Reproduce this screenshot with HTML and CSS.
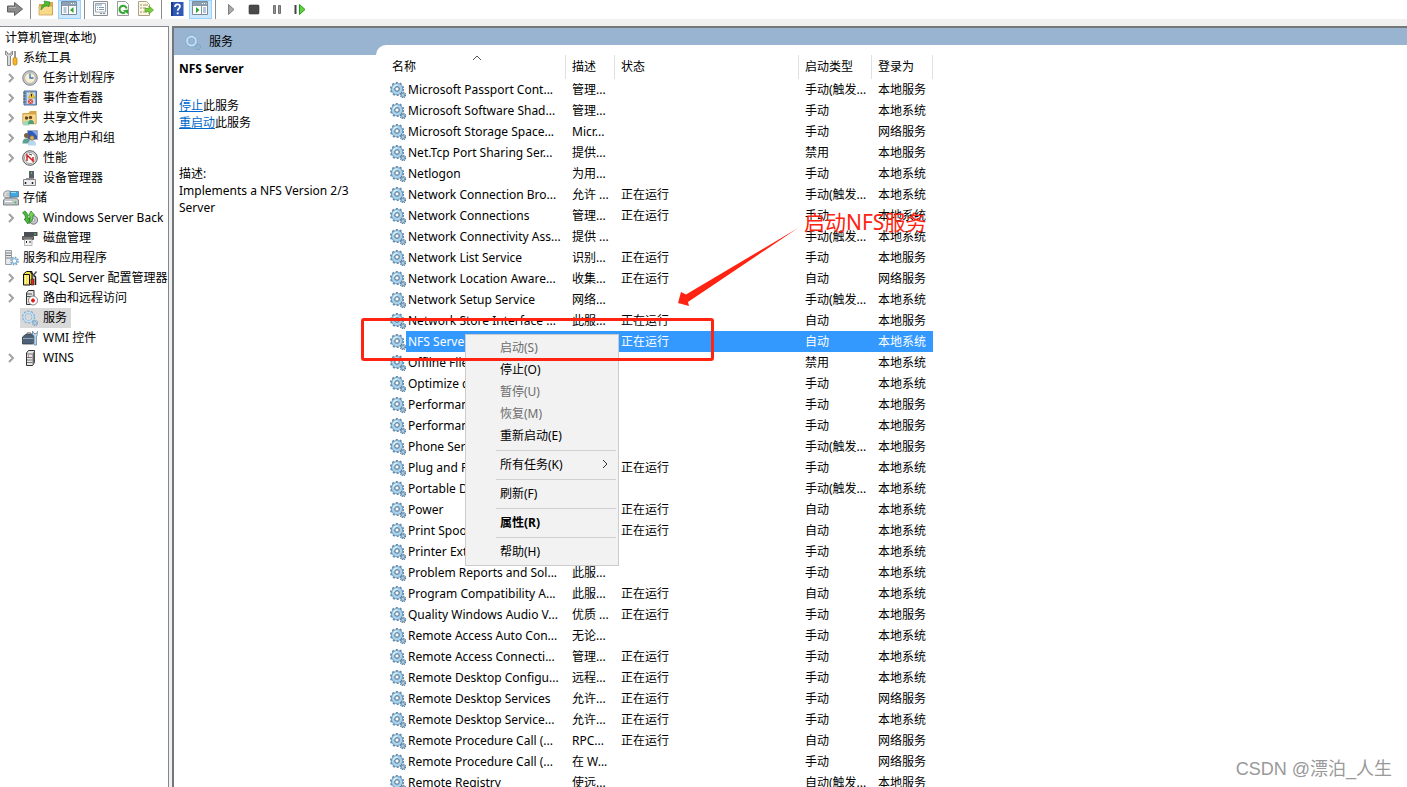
FILE: index.html
```html
<!DOCTYPE html>
<html lang="zh-CN">
<head>
    <meta charset="UTF-8">
    <meta name="viewport" content="width=device-width, initial-scale=1.0">
    <title>计算机管理</title>
    <link rel="stylesheet" href="styles.css">
</head>
<body>

    <!-- Shared icons -->
    <svg class="sprite" aria-hidden="true">
        <symbol id="gear" viewBox="0 0 16 16">
            <circle cx="7" cy="7" r="6.2" fill="none" stroke="#5f88ab" stroke-width="1.8" stroke-dasharray="2 1.9"/>
            <circle cx="7" cy="7" r="4.2" fill="none" stroke="#6d98ba" stroke-width="3.8"/>
            <circle cx="7" cy="7" r="4" fill="none" stroke="#a9d3ea" stroke-width="2.4"/>
            <path d="M3.500 6a4 4 0 0 1 4-3" fill="none" stroke="#dff3fb" stroke-width="1.200"/>
            <circle cx="7" cy="7" r="2.1" fill="#fff" stroke="#4c6d8c" stroke-width=".9"/>
            <circle cx="13" cy="13" r="2.600" fill="none" stroke="#4f7696" stroke-width="1.200" stroke-dasharray="1.200 .84"/>
            <circle cx="13" cy="13" r="1.500" fill="#fff" stroke="#7aa2c0" stroke-width="1.500"/>
        </symbol>
        <symbol id="gear-light" viewBox="0 0 16 16">
            <circle cx="6.500" cy="7" r="5.900" fill="none" stroke="#7fa9cb" stroke-width="1.200" stroke-dasharray="2 1.700"/>
            <circle cx="6.500" cy="7" r="4.400" fill="none" stroke="#8fb7d6" stroke-width="2.600"/>
            <circle cx="6.500" cy="7" r="4.500" fill="none" stroke="#c9e6f6" stroke-width="1.500"/>
            <circle cx="13" cy="13" r="2.600" fill="none" stroke="#7ba3c2" stroke-width="1.200" stroke-dasharray="1.200 .84"/>
            <circle cx="13" cy="13" r="1.500" fill="none" stroke="#8db3cf" stroke-width="1.200"/>
        </symbol>
        <symbol id="chevron" viewBox="0 0 12 12">
            <path d="M4 2l4 4-4 4" fill="none" stroke="#a3a3a3" stroke-width="2"/>
        </symbol>
        <symbol id="console" viewBox="0 0 16 16">
            <path d="M.5 1.5h15v13H.5z" fill="#fff" stroke="#7e8b99"/>
            <path d="M1 2h14v3H1z" fill="#8ba0b5"/>
            <path d="M10 3.5h1M12 3.5h1M14 3.5h.5" stroke="#fff"/>
        </symbol>
    </svg>

    <!-- Toolbar -->
    <div id="toolbar">
        <button class="tool" aria-label="前进">
            <svg viewBox="0 0 16 16"><path d="M.5 6h7V2.500l8 6.500-8 6.500V12h-7z" fill="#8b8b8b" stroke="#5f5f5f"/><path d="M2 7.500h7" stroke="#b5b5b5"/></svg>
        </button>
        <span class="divider"></span>
        <button class="tool" aria-label="向上">
            <svg viewBox="0 0 16 16"><path d="M1 4h5l2-2h7v13H1z" fill="#d9a94a"/><path d="M1 6h13.5v9H1z" fill="#f8d98a" stroke="#c59a45" stroke-width=".7"/><path d="M3 10c0-4 1-5 4-6L6 1l6 1-1.500 5-1.500-1.500c-3 1-4 2-6 4.500z" fill="#4dbd31" stroke="#23821c" stroke-width=".6"/></svg>
        </button>
        <button class="tool active" aria-label="显示/隐藏控制台树">
            <svg viewBox="0 0 16 16"><use href="#console"/><path d="M1 5.500h14M7.500 6v8" stroke="#8a97a5"/><path d="M2.500 8h3M2.500 10h3M2.500 12h3" stroke="#6d8fb5"/><path d="M12.500 7v6L9 10z" fill="#2fa52a"/></svg>
        </button>
        <span class="divider"></span>
        <button class="tool" aria-label="属性">
            <svg viewBox="0 0 16 16"><path d="M1.500 1.500h14v14h-14z" fill="#f6f8fa" stroke="#8a8f94"/><path d="M3.500 3.500h10v8.500h-10z" fill="#fff" stroke="#9ba9b7"/><path d="M4 5h6M5 7.500h1M7 7.500h5M5 9.500h1M7 9.500h5" stroke="#7f9cba"/><path d="M8 13.500h2M11 13.500h2" stroke="#888"/></svg>
        </button>
        <button class="tool" aria-label="刷新">
            <svg viewBox="0 0 16 16"><path d="M2.500 1.500h8l3 3v11h-11z" fill="#fcfcfc" stroke="#9b9b9b"/><path d="M10 12.500a3.600 3.600 0 1 1 1.600-4" fill="none" stroke="#2fa82e" stroke-width="2"/><path d="M7.500 10.500l5.500-1v4.500z" fill="#2fa82e"/></svg>
        </button>
        <button class="tool" aria-label="导出列表">
            <svg viewBox="0 0 16 16"><path d="M.5 1.500h8l3 3v11H.5z" fill="#fdf8df" stroke="#aaa288"/><path d="M2 5h2M5 5h5M2 8h2M5 8h3M2 12h2M5 12h4" stroke="#9a957e"/><path d="M7 8.500h4V6l4.500 4-4.500 4v-2.500H7z" fill="#7ccb3c" stroke="#4d9b22" stroke-width=".7"/></svg>
        </button>
        <span class="divider"></span>
        <button class="tool" aria-label="帮助">
            <svg viewBox="0 0 16 16"><path d="M2 2h12.500v14H2z" fill="#3158b5"/><path d="M2 2h2v14H2z" fill="#1d3b8b"/><path d="M6 7c0-3.500 5-3.500 5-.7 0 2-2.300 2-2.300 4.500" fill="none" stroke="#fff" stroke-width="1.700"/><circle cx="8.700" cy="13.300" r="1.100" fill="#fff"/></svg>
        </button>
        <button class="tool active" aria-label="显示/隐藏操作窗格">
            <svg viewBox="0 0 16 16"><use href="#console"/><path d="M1 5.500h14M9.500 6v8" stroke="#8a97a5"/><path d="M11 8h3M11 10h3M11 12h3" stroke="#6d8fb5"/><path d="M4 7v6l3.500-3z" fill="#2fa52a"/></svg>
        </button>
        <span class="divider"></span>
        <button class="tool" aria-label="启动服务">
            <svg viewBox="0 0 16 16"><path d="M5.500 4.500v10l5.500-5z" fill="#a9a9a9" stroke="#7d7d7d"/></svg>
        </button>
        <button class="tool" aria-label="停止服务">
            <svg viewBox="0 0 16 16"><rect x="3" y="5" width="10" height="9" rx="1" fill="#4a4a4a" stroke="#333" stroke-width=".6"/></svg>
        </button>
        <button class="tool" aria-label="暂停服务">
            <svg viewBox="0 0 16 16"><path d="M4.500 5.500h2v8h-2zM9.500 5.500h2v8h-2z" fill="#999" stroke="#6f6f6f"/></svg>
        </button>
        <button class="tool" aria-label="重启动服务">
            <svg viewBox="0 0 16 16"><path d="M2.500 5h2v9h-2z" fill="#444"/><path d="M7.500 4.500v10l5.500-5z" fill="#5fd33b" stroke="#26981f"/></svg>
        </button>
    </div>

    <div id="workspace">

        <!-- Console tree -->
        <nav id="tree">
            <div class="root">计算机管理(本地)</div>
            <div class="group">
                <svg class="icon" viewBox="0 0 16 16"><path d="M2.500 1v3.500l2 1.500v9.500h3V6l2-1.500V1L8 2.500V4H4.500V2.500z" fill="#dadada" stroke="#6f6f6f" stroke-width=".8"/><path d="M12 1v7" stroke="#777" stroke-width="1.500"/><rect x="10" y="7.500" width="4" height="7.500" rx="1.500" fill="#f5b526" stroke="#b47a10" stroke-width=".7"/></svg>
                系统工具
            </div>
            <div class="node">
                <button class="twisty" aria-label="展开"><svg><use href="#chevron"/></svg></button>
                <span class="label">
                    <svg class="icon" viewBox="0 0 16 16"><circle cx="8" cy="8" r="7.300" fill="#c6c9cc" stroke="#777b80" stroke-width=".9"/><circle cx="8" cy="8" r="5.300" fill="#f6efd2" stroke="#9a9a95" stroke-width=".5"/><path d="M8 3.500V8h3.500" fill="none" stroke="#3b71b5" stroke-width="1.300"/></svg>
                    任务计划程序
                </span>
            </div>
            <div class="node">
                <button class="twisty" aria-label="展开"><svg><use href="#chevron"/></svg></button>
                <span class="label">
                    <svg class="icon" viewBox="0 0 16 16"><path d="M2 1h12.500v14H2z" fill="#87a9d4" stroke="#46658f" stroke-width=".9"/><path d="M5 2.500h8V14H5z" fill="#c9d8ea"/><path d="M1 3h3M1 6h3M1 9h3M1 12h3" stroke="#565c64"/><path d="M9.500 2l3.500 6H6.500z" fill="#f6cd2a" stroke="#aa8212" stroke-width=".5"/><path d="M9.500 4v2.500" stroke="#222"/><circle cx="8.500" cy="11.500" r="2.500" fill="#d9453b"/><path d="M7.500 10.500l2 2m0-2l-2 2" stroke="#fff" stroke-width=".8"/></svg>
                    事件查看器
                </span>
            </div>
            <div class="node">
                <button class="twisty" aria-label="展开"><svg><use href="#chevron"/></svg></button>
                <span class="label">
                    <svg class="icon" viewBox="0 0 16 16"><path d="M.5 3h6l1.500-2h6.500v13H.5z" fill="#d8a547"/><path d="M1 4h13v10H1z" fill="#f8d98b" stroke="#c99b43" stroke-width=".6"/><circle cx="4.500" cy="8" r="1.700" fill="#6a4524"/><circle cx="8.500" cy="7.500" r="1.700" fill="#6a4524"/><path d="M1 15.500c0-3 1-5 3.500-5s3 2 3 5z" fill="#9fd8bd"/><path d="M6 14c0-2.500 1-4 3-4s3 1.500 3 4z" fill="#4aa078"/></svg>
                    共享文件夹
                </span>
            </div>
            <div class="node">
                <button class="twisty" aria-label="展开"><svg><use href="#chevron"/></svg></button>
                <span class="label">
                    <svg class="icon" viewBox="0 0 16 16"><path d="M5.500.5h10v9h-10z" fill="#2959c2" stroke="#a9adb3"/><path d="M10 1l5 5V1z" fill="#7ea5e8"/><circle cx="4.500" cy="5.500" r="2.500" fill="#7a6040"/><path d="M.5 13.500c0-4 1.500-5 4-5s4 1.500 4 5z" fill="#5f9f93"/><circle cx="10" cy="8" r="2.400" fill="#d7ac6a" stroke="#73512a" stroke-width=".7"/><path d="M6 15.500c0-4 1-5 4-5s4 1 4 5z" fill="#b5d6ee"/></svg>
                    本地用户和组
                </span>
            </div>
            <div class="node">
                <button class="twisty" aria-label="展开"><svg><use href="#chevron"/></svg></button>
                <span class="label">
                    <svg class="icon" viewBox="0 0 16 16"><circle cx="8" cy="8" r="7.300" fill="#e2e2e2" stroke="#555" stroke-width="1"/><circle cx="8" cy="8" r="5.500" fill="#fff" stroke="#8c8c8c" stroke-width=".8"/><path d="M5 11V5l6 6V7" fill="none" stroke="#cf1f1f" stroke-width="1.500"/><path d="M7 4l3 1" stroke="#444" stroke-width="1"/></svg>
                    性能
                </span>
            </div>
            <div class="node leaf">
                <span class="label">
                    <svg class="icon" viewBox="0 0 16 16"><path d="M7 1h5v8H7z" fill="#5a6065"/><path d="M9 3h1" stroke="#5bdc45" stroke-width="1.500"/><path d="M4 8h8v2H4z" fill="#8e9499"/><path d="M1.500 9.500h12v6h-12z" fill="#ededed" stroke="#888"/><path d="M3.500 12v2M10.500 12v2" stroke="#222" stroke-width="1.500"/></svg>
                    设备管理器
                </span>
            </div>
            <div class="group">
                <svg class="icon" viewBox="0 0 16 16"><ellipse cx="5" cy="4.500" rx="4.500" ry="3.700" fill="#d5d8dc" stroke="#7d8288" stroke-width=".8"/><circle cx="5" cy="4.500" r="1" fill="#fff" stroke="#777" stroke-width=".5"/><path d="M7 1.500h8.500V7H7z" fill="#41a7dc" stroke="#4a7896" stroke-width=".8"/><path d="M8 2.500h5" stroke="#9ddcf4"/><path d="M.5 10l2-2h11l2 2v5H.5z" fill="#c3c7cb" stroke="#666a70" stroke-width=".8"/><path d="M2 11.500h7" stroke="#fff"/><circle cx="12.500" cy="12.500" r="1" fill="#35c534"/></svg>
                存储
            </div>
            <div class="node">
                <button class="twisty" aria-label="展开"><svg><use href="#chevron"/></svg></button>
                <span class="label">
                    <svg class="icon" viewBox="0 0 16 16"><circle cx="11.500" cy="10" r="4.200" fill="#c4c7cb" stroke="#555a60" stroke-width=".8"/><circle cx="11.500" cy="10" r="1.200" fill="#fff" stroke="#666" stroke-width=".5"/><path d="M.5 3l2-2c2.500 1 3.500 4 3.500 7h2l-2 6-4-5h1.500c0-3-1-5-3-6z" fill="#4bb93a" stroke="#22761b" stroke-width=".7"/><path d="M9 1l3.500 4-1.500.5c0 3-1 6-3.500 8C8 10 8 8 8 6l-1.500-.5z" fill="#74d35c" stroke="#22761b" stroke-width=".7"/></svg>
                    Windows Server Back
                </span>
            </div>
            <div class="node leaf">
                <span class="label">
                    <svg class="icon" viewBox="0 0 16 16"><path d="M2 2h13.500v4H2z" fill="#4c5055"/><path d="M12 4h2" stroke="#50df43" stroke-width="1.200"/><path d="M.5 6.500h11v3H.5z" fill="#777" stroke="#555"/><path d="M2.500 9.500h7.500v6H2.500z" fill="#f4f4f4" stroke="#999" stroke-width=".7"/><path d="M4.500 11v2M8 11v2" stroke="#222"/></svg>
                    磁盘管理
                </span>
            </div>
            <div class="group">
                <svg class="icon" viewBox="0 0 16 16"><path d="M2.500.5h6v14h-6z" fill="#e6e8ea" stroke="#9a9ea3"/><path d="M3 3h5M3 5.500h5M3 8h5" stroke="#7b8086"/><circle cx="11.500" cy="11" r="3.600" fill="#fff" stroke="#79a4c6" stroke-width="1.600" stroke-dasharray="1.600 1.200"/><circle cx="11.500" cy="11" r="2.400" fill="#fff" stroke="#8fb8d6" stroke-width="1.400"/></svg>
                服务和应用程序
            </div>
            <div class="node">
                <button class="twisty" aria-label="展开"><svg><use href="#chevron"/></svg></button>
                <span class="label">
                    <svg class="icon" viewBox="0 0 16 16"><path d="M1.500 4l3-2.500h5.500v11l-2 2.500H1.500z" fill="#f4e04a" stroke="#111"/><path d="M3.500 4v10M6 4v10" stroke="#fff8b0"/><path d="M1.500 4.500h6v10" fill="none" stroke="#111"/><path d="M8.500 2l5 5v8" fill="none" stroke="#222" stroke-width="1.500"/><path d="M14.500 1.500l-4 5V9" fill="none" stroke="#555" stroke-width="1.500"/><path d="M9 9h3v6H9z" fill="#d9291f" stroke="#222" stroke-width=".6"/></svg>
                    SQL Server 配置管理器
                </span>
            </div>
            <div class="node">
                <button class="twisty" aria-label="展开"><svg><use href="#chevron"/></svg></button>
                <span class="label">
                    <svg class="icon" viewBox="0 0 16 16"><path d="M4.500 3l2-2.500h5.500v11l-2 3H4.500z" fill="#e3e3e3" stroke="#333"/><path d="M5 4h5M5 6.500h5" stroke="#555"/><circle cx="11" cy="10.500" r="4.500" fill="#fff" stroke="#666" stroke-width=".8"/><path d="M11 8.500v4M9 10.500h4" stroke="#e51313" stroke-width="1.800"/></svg>
                    路由和远程访问
                </span>
            </div>
            <div class="node leaf selected">
                <span class="label"><svg class="icon"><use href="#gear-light"/></svg>服务</span>
            </div>
            <div class="node leaf">
                <span class="label">
                    <svg class="icon" viewBox="0 0 16 16"><path d="M.5 7l3-2.500h9v8L10.500 14H.5z" fill="#4d6277" stroke="#2f3c49" stroke-width=".8"/><path d="M1 8.500h10" stroke="#8fa6ba"/><path d="M5 4.500V3h4v1.500" fill="none" stroke="#555"/><path d="M10.500 1v3.500L12 6v9h2.500V6L16 4.500V1l-1.500 2.500H12z" fill="#bcd7ec" stroke="#5b7892" stroke-width=".7"/></svg>
                    WMI 控件
                </span>
            </div>
            <div class="node">
                <button class="twisty" aria-label="展开"><svg><use href="#chevron"/></svg></button>
                <span class="label">
                    <svg class="icon" viewBox="0 0 16 16"><path d="M4.500 3l2-2.500h6v12l-2 3h-6z" fill="#e6e6e6" stroke="#333"/><path d="M10.500 3.500v11l2-2.500V1z" fill="#666"/><path d="M5 4h5M5 7.500h5M5 10h5M5 12.500h5" stroke="#777"/><path d="M6 6h1" stroke="#d33"/></svg>
                    WINS
                </span>
            </div>
        </nav>

        <!-- Services pane -->
        <main id="services">
            <div class="side">
                <div class="pane-title"><svg class="icon"><use href="#gear-light"/></svg>服务</div>
                <div class="details">
                    <h1>NFS Server</h1>
                    <p><a href="#">停止</a>此服务<br><a href="#">重启动</a>此服务</p>
                    <p class="description">描述:<br>Implements a NFS Version 2/3 Server</p>
                </div>
            </div>

            <div class="list">
                <table>
                    <colgroup>
                        <col class="col-name"><col class="col-desc"><col class="col-status"><col class="col-type"><col class="col-logon">
                    </colgroup>
                    <thead>
                        <tr>
                            <th class="sorted">名称<svg class="sort-arrow" viewBox="0 0 10 6"><path d="M1 5l4-4 4 4" fill="none" stroke="#555"/></svg></th>
                            <th>描述</th><th>状态</th><th>启动类型</th><th>登录为</th>
                        </tr>
                    </thead>
                    <tbody>
                        <tr><td><div class="name"><svg class="icon"><use href="#gear"/></svg><span>Microsoft Passport Cont...</span></div></td><td>管理...</td><td></td><td>手动(触发...</td><td>本地服务</td></tr>
                        <tr><td><div class="name"><svg class="icon"><use href="#gear"/></svg><span>Microsoft Software Shad...</span></div></td><td>管理...</td><td></td><td>手动</td><td>本地系统</td></tr>
                        <tr><td><div class="name"><svg class="icon"><use href="#gear"/></svg><span>Microsoft Storage Space...</span></div></td><td>Micr...</td><td></td><td>手动</td><td>网络服务</td></tr>
                        <tr><td><div class="name"><svg class="icon"><use href="#gear"/></svg><span>Net.Tcp Port Sharing Ser...</span></div></td><td>提供...</td><td></td><td>禁用</td><td>本地服务</td></tr>
                        <tr><td><div class="name"><svg class="icon"><use href="#gear"/></svg><span>Netlogon</span></div></td><td>为用...</td><td></td><td>手动</td><td>本地系统</td></tr>
                        <tr><td><div class="name"><svg class="icon"><use href="#gear"/></svg><span>Network Connection Bro...</span></div></td><td>允许 ...</td><td>正在运行</td><td>手动(触发...</td><td>本地系统</td></tr>
                        <tr><td><div class="name"><svg class="icon"><use href="#gear"/></svg><span>Network Connections</span></div></td><td>管理...</td><td>正在运行</td><td>手动</td><td>本地系统</td></tr>
                        <tr><td><div class="name"><svg class="icon"><use href="#gear"/></svg><span>Network Connectivity Ass...</span></div></td><td>提供 ...</td><td></td><td>手动(触发...</td><td>本地系统</td></tr>
                        <tr><td><div class="name"><svg class="icon"><use href="#gear"/></svg><span>Network List Service</span></div></td><td>识别...</td><td>正在运行</td><td>手动</td><td>本地服务</td></tr>
                        <tr><td><div class="name"><svg class="icon"><use href="#gear"/></svg><span>Network Location Aware...</span></div></td><td>收集...</td><td>正在运行</td><td>自动</td><td>网络服务</td></tr>
                        <tr><td><div class="name"><svg class="icon"><use href="#gear"/></svg><span>Network Setup Service</span></div></td><td>网络...</td><td></td><td>手动(触发...</td><td>本地系统</td></tr>
                        <tr><td><div class="name"><svg class="icon"><use href="#gear"/></svg><span>Network Store Interface ...</span></div></td><td>此服...</td><td>正在运行</td><td>自动</td><td>本地服务</td></tr>
                        <tr class="selected"><td><div class="name"><svg class="icon"><use href="#gear"/></svg><span>NFS Server</span></div></td><td></td><td>正在运行</td><td>自动</td><td>本地系统</td></tr>
                        <tr><td><div class="name"><svg class="icon"><use href="#gear"/></svg><span>Offline Files</span></div></td><td></td><td></td><td>禁用</td><td>本地系统</td></tr>
                        <tr><td><div class="name"><svg class="icon"><use href="#gear"/></svg><span>Optimize drives</span></div></td><td></td><td></td><td>手动</td><td>本地系统</td></tr>
                        <tr><td><div class="name"><svg class="icon"><use href="#gear"/></svg><span>Performance Counter...</span></div></td><td></td><td></td><td>手动</td><td>本地服务</td></tr>
                        <tr><td><div class="name"><svg class="icon"><use href="#gear"/></svg><span>Performance Logs...</span></div></td><td></td><td></td><td>手动</td><td>本地服务</td></tr>
                        <tr><td><div class="name"><svg class="icon"><use href="#gear"/></svg><span>Phone Service</span></div></td><td></td><td></td><td>手动(触发...</td><td>本地服务</td></tr>
                        <tr><td><div class="name"><svg class="icon"><use href="#gear"/></svg><span>Plug and Play</span></div></td><td></td><td>正在运行</td><td>手动</td><td>本地系统</td></tr>
                        <tr><td><div class="name"><svg class="icon"><use href="#gear"/></svg><span>Portable Device...</span></div></td><td></td><td></td><td>手动(触发...</td><td>本地系统</td></tr>
                        <tr><td><div class="name"><svg class="icon"><use href="#gear"/></svg><span>Power</span></div></td><td></td><td>正在运行</td><td>自动</td><td>本地系统</td></tr>
                        <tr><td><div class="name"><svg class="icon"><use href="#gear"/></svg><span>Print Spooler</span></div></td><td></td><td>正在运行</td><td>自动</td><td>本地系统</td></tr>
                        <tr><td><div class="name"><svg class="icon"><use href="#gear"/></svg><span>Printer Extensions...</span></div></td><td></td><td></td><td>手动</td><td>本地系统</td></tr>
                        <tr><td><div class="name"><svg class="icon"><use href="#gear"/></svg><span>Problem Reports and Sol...</span></div></td><td>此服...</td><td></td><td>手动</td><td>本地系统</td></tr>
                        <tr><td><div class="name"><svg class="icon"><use href="#gear"/></svg><span>Program Compatibility A...</span></div></td><td>此服...</td><td>正在运行</td><td>自动</td><td>本地系统</td></tr>
                        <tr><td><div class="name"><svg class="icon"><use href="#gear"/></svg><span>Quality Windows Audio V...</span></div></td><td>优质 ...</td><td>正在运行</td><td>手动</td><td>本地服务</td></tr>
                        <tr><td><div class="name"><svg class="icon"><use href="#gear"/></svg><span>Remote Access Auto Con...</span></div></td><td>无论...</td><td></td><td>手动</td><td>本地系统</td></tr>
                        <tr><td><div class="name"><svg class="icon"><use href="#gear"/></svg><span>Remote Access Connecti...</span></div></td><td>管理...</td><td>正在运行</td><td>手动</td><td>本地系统</td></tr>
                        <tr><td><div class="name"><svg class="icon"><use href="#gear"/></svg><span>Remote Desktop Configu...</span></div></td><td>远程...</td><td>正在运行</td><td>手动</td><td>本地系统</td></tr>
                        <tr><td><div class="name"><svg class="icon"><use href="#gear"/></svg><span>Remote Desktop Services</span></div></td><td>允许...</td><td>正在运行</td><td>手动</td><td>网络服务</td></tr>
                        <tr><td><div class="name"><svg class="icon"><use href="#gear"/></svg><span>Remote Desktop Service...</span></div></td><td>允许...</td><td>正在运行</td><td>手动</td><td>本地系统</td></tr>
                        <tr><td><div class="name"><svg class="icon"><use href="#gear"/></svg><span>Remote Procedure Call (...</span></div></td><td>RPC...</td><td>正在运行</td><td>自动</td><td>网络服务</td></tr>
                        <tr><td><div class="name"><svg class="icon"><use href="#gear"/></svg><span>Remote Procedure Call (...</span></div></td><td>在 W...</td><td></td><td>手动</td><td>网络服务</td></tr>
                        <tr><td><div class="name"><svg class="icon"><use href="#gear"/></svg><span>Remote Registry</span></div></td><td>使远...</td><td></td><td>自动(触发...</td><td>本地服务</td></tr>
                    </tbody>
                </table>
            </div>
        </main>
    </div>

    <!-- Context menu -->
    <div id="context-menu" role="menu">
        <button role="menuitem" disabled>启动(S)</button>
        <button role="menuitem">停止(O)</button>
        <button role="menuitem" disabled>暂停(U)</button>
        <button role="menuitem" disabled>恢复(M)</button>
        <button role="menuitem">重新启动(E)</button>
        <hr>
        <button role="menuitem">所有任务(K)<svg class="submenu" viewBox="0 0 6 10"><path d="M1 1l4 4-4 4" fill="none" stroke="#333"/></svg></button>
        <hr>
        <button role="menuitem">刷新(F)</button>
        <hr>
        <button role="menuitem" class="default">属性(R)</button>
        <hr>
        <button role="menuitem">帮助(H)</button>
    </div>

    <!-- Annotation marks -->
    <div class="mark-box"></div>
    <svg class="mark-arrow" viewBox="0 0 122 80"><path d="M121 1L9 67.500 4 65 1 76l11 3-1-4z" fill="#ff2312"/></svg>
    <div class="mark-text">启动NFS服务</div>
    <div class="watermark">CSDN @漂泊_人生</div>

</body>
</html>
```

FILE: styles.css
```css
* {
    margin: 0;
    padding: 0;
    box-sizing: border-box;
}

:root {
    --band: #99b4d1;
    --face: #f0f0f0;
    --select: #3399ff;
    --mark: #ff2312;
}

body {
    position: relative;
    display: flex;
    flex-direction: column;
    height: 100vh;
    overflow: hidden;
    background: var(--face);
    color: #000;
    font: 12px/17px "Noto Sans", "Noto Sans CJK SC", sans-serif;
}

button {
    border: none;
    background: none;
    color: inherit;
    font: inherit;
}

.sprite {
    display: none;
}

.icon {
    flex: none;
    width: 16px;
    height: 16px;
}

/* Toolbar */
#toolbar {
    display: flex;
    flex: none;
    height: 19px;
    margin-bottom: 7px;
    padding-left: 4px;
    background: #fff;
}

.tool {
    display: flex;
    width: 23px;
    height: 19px;
    padding-left: 3px;
}

.tool svg {
    width: 16px;
    height: 16px;
}

.tool.active {
    background: #cce8ff;
    box-shadow: inset 0 0 0 1px #99d1ff;
}

.divider {
    width: 1px;
    margin: 0 4px 0 3px;
    background: #8c8c8c;
}

/* Main split */
#workspace {
    display: flex;
    flex: 1;
    min-height: 0;
    gap: 3px;
}

/* Console tree */
#tree {
    flex: none;
    width: 169px;
    padding-top: 1px;
    overflow: hidden;
    background: #fff;
    border-top: 1px solid #828790;
    border-right: 1px solid #828790;
    line-height: 20px;
    white-space: nowrap;
}

.root {
    padding-left: 5px;
}

.group {
    display: flex;
    align-items: center;
    gap: 4px;
    padding-left: 3px;
}

.node {
    display: flex;
    align-items: center;
    gap: 3px;
    padding-left: 5px;
}

.node.leaf {
    padding-left: 20px;
}

.twisty {
    flex: none;
    width: 12px;
    height: 12px;
}

.twisty svg {
    display: block;
    width: 12px;
    height: 12px;
}

.label {
    display: flex;
    align-items: center;
    gap: 5px;
    padding: 0 4px 0 2px;
}

.node.selected .label {
    background: #d9d9d9;
}

/* Services pane */
#services {
    display: flex;
    flex: 1;
    min-width: 0;
    background: var(--band);
    border-top: 2px solid #74777a;
    border-left: 2px solid #74777a;
}

.side {
    display: flex;
    flex: none;
    flex-direction: column;
    width: 202px;
}

.pane-title {
    display: flex;
    align-items: center;
    gap: 8px;
    height: 27px;
    padding-left: 11px;
}

.details {
    flex: 1;
    padding: 5px 16px 0 5px;
    background: #fff;
}

.details h1 {
    margin-bottom: 20px;
    font-size: 12px;
}

.details a {
    color: #0066cc;
}

.description {
    margin-top: 34px;
}

/* Service list */
.list {
    flex: 1;
    min-width: 0;
    margin-top: 17px;
    padding: 10px 0 0 10px;
    overflow: hidden;
    background: #fff;
    border-top-left-radius: 10px;
}

table {
    width: 547px;
    table-layout: fixed;
    border-collapse: separate;
    border-spacing: 0;
    white-space: nowrap;
}

.col-name { width: 180px; }
.col-desc { width: 49px; }
.col-status { width: 184px; }
.col-type { width: 73px; }
.col-logon { width: 61px; }

th {
    height: 24px;
    padding: 0 0 2px 6px;
    border-right: 1px solid #e0e0e0;
    font-weight: normal;
    text-align: left;
}

th.sorted {
    position: relative;
}

.sort-arrow {
    position: absolute;
    top: 0;
    left: 50%;
    width: 10px;
    height: 6px;
    margin-left: -4px;
}

td {
    height: 21px;
    padding-left: 6px;
    line-height: 21px;
}

td:first-child {
    padding-left: 4px;
}

.name {
    display: flex;
    align-items: center;
}

.name span {
    flex: 1;
    min-width: 0;
    padding-left: 2px;
    overflow: hidden;
}

tr.selected td {
    background: var(--select);
    color: #fff;
}

tr.selected td:first-child {
    background: none;
}

tr.selected .name span {
    background: var(--select);
}

/* Context menu */
#context-menu {
    position: absolute;
    top: 334px;
    left: 465px;
    width: 154px;
    padding: 2px;
    background: #f2f2f2;
    border: 1px solid #ccc;
}

#context-menu button {
    display: flex;
    align-items: center;
    justify-content: space-between;
    width: 100%;
    height: 22px;
    padding: 0 8px 2px 32px;
}

#context-menu button:disabled {
    color: #6d6d6d;
}

#context-menu .default {
    font-weight: bold;
}

#context-menu hr {
    height: 1px;
    margin: 3px 0 3px 28px;
    border: none;
    background: #d0d0d0;
}

.submenu {
    width: 6px;
    height: 10px;
}

/* Annotation marks */
.mark-box {
    position: absolute;
    top: 318px;
    left: 361px;
    width: 353px;
    height: 43px;
    border: 3px solid var(--mark);
    border-radius: 3px;
}

.mark-arrow {
    position: absolute;
    top: 227px;
    left: 677px;
    width: 122px;
    height: 80px;
}

.mark-text {
    position: absolute;
    top: 208px;
    left: 804px;
    color: var(--mark);
    font-size: 21px;
    line-height: 28px;
}

.watermark {
    position: absolute;
    right: 15px;
    bottom: 6px;
    color: #999;
    font-family: "Liberation Sans", "Noto Sans CJK SC", sans-serif;
    font-size: 18px;
    line-height: 24px;
}
```
